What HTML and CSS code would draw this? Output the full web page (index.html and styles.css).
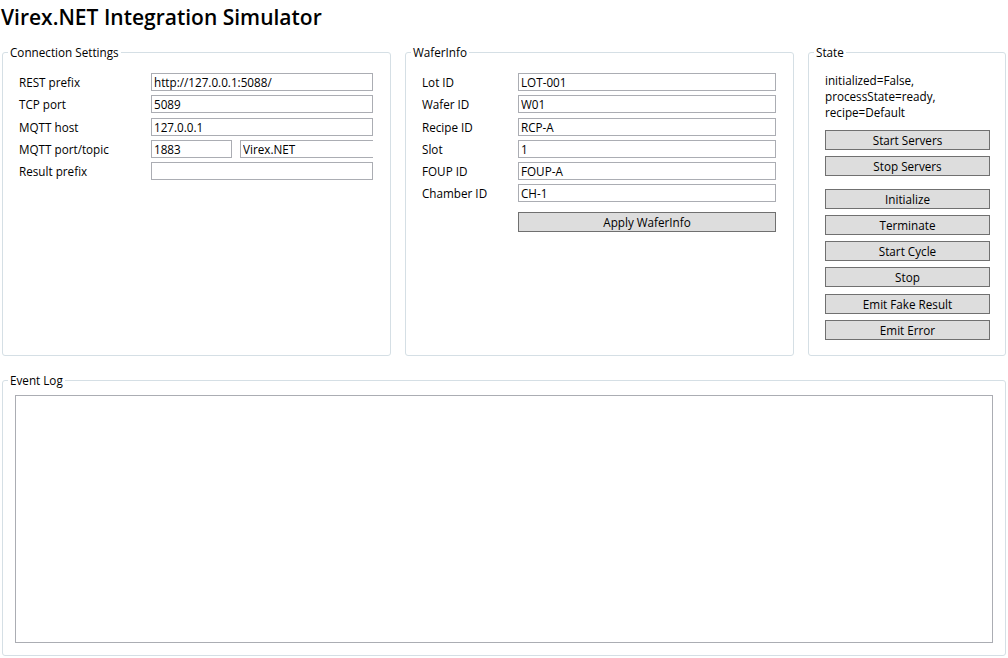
FILE: index.html
```html
<!DOCTYPE html>
<html lang="en">
<head>
  <meta charset="UTF-8" />
  <meta name="viewport" content="width=device-width, initial-scale=1.0" />
  <title>Virex.NET Integration Simulator</title>
  <link rel="stylesheet" href="styles.css">
</head>
<body>

  <h1 class="title">Virex.NET Integration Simulator</h1>

  <div class="panels">
    <fieldset class="group">
      <legend>Connection Settings</legend>
      <div class="form conn-form">
        <label>REST prefix</label>
        <input class="box" type="text" value="http://127.0.0.1:5088/" />
        <label>TCP port</label>
        <input class="box" type="text" value="5089" />
        <label>MQTT host</label>
        <input class="box" type="text" value="127.0.0.1" />
        <label>MQTT port/topic</label>
        <div class="pair">
          <input class="box port" type="text" value="1883" />
          <input class="box topic" type="text" value="Virex.NET" />
        </div>
        <label>Result prefix</label>
        <input class="box" type="text" value="" />
      </div>
    </fieldset>

    <fieldset class="group">
      <legend>WaferInfo</legend>
      <div class="form wafer-form">
        <label>Lot ID</label>
        <input class="box" type="text" value="LOT-001" />
        <label>Wafer ID</label>
        <input class="box" type="text" value="W01" />
        <label>Recipe ID</label>
        <input class="box" type="text" value="RCP-A" />
        <label>Slot</label>
        <input class="box" type="text" value="1" />
        <label>FOUP ID</label>
        <input class="box" type="text" value="FOUP-A" />
        <label>Chamber ID</label>
        <input class="box" type="text" value="CH-1" />
      </div>
      <div class="apply-row">
        <button class="btn" type="button">Apply WaferInfo</button>
      </div>
    </fieldset>

    <fieldset class="group state">
      <legend>State</legend>
      <div class="state-text">
        initialized=False,<br>
        processState=ready,<br>
        recipe=Default
      </div>
      <div class="actions">
        <button class="btn" type="button">Start Servers</button>
        <button class="btn" type="button">Stop Servers</button>
        <button class="btn spaced" type="button">Initialize</button>
        <button class="btn" type="button">Terminate</button>
        <button class="btn" type="button">Start Cycle</button>
        <button class="btn" type="button">Stop</button>
        <button class="btn" type="button">Emit Fake Result</button>
        <button class="btn" type="button">Emit Error</button>
      </div>
    </fieldset>
  </div>

  <fieldset class="group log">
    <legend>Event Log</legend>
    <textarea class="log-box" readonly></textarea>
  </fieldset>

</body>
</html>
```

FILE: styles.css
```css
body {
  margin: 0;
  font-family: "Open Sans", "Noto Sans", sans-serif;
  font-size: 11.7px;
  color: #000;
  background-color: #fff;
}

.title {
  margin: 0;
  padding-left: 1px;
  height: 44px;
  font-size: 21px;
  font-weight: 600;
  line-height: 34px;
}

.panels {
  display: grid;
  grid-template-columns: 1fr 1fr 198px;
  column-gap: 14px;
  height: 312px;
  padding: 0 2px;
}

.group {
  margin: 0;
  min-width: 0;
  padding: 13px 17px 12px 16px;
  border: 1px solid #d5dfe5;
  border-radius: 3px;
}

.group legend {
  margin-left: -11px;
  padding: 0 2px;
  line-height: 16px;
}

.form {
  display: grid;
  grid-auto-rows: 18px;
  row-gap: 4.3px;
  align-items: center;
}

.conn-form {
  grid-template-columns: 132px 1fr;
}

.wafer-form {
  grid-template-columns: 96px 1fr;
}

.box {
  box-sizing: border-box;
  width: 100%;
  height: 18px;
  margin: 0;
  padding: 0 2px;
  border: 1px solid #abadb3;
  font: inherit;
  color: #000;
  background-color: #fff;
}

.pair {
  display: flex;
  gap: 8px;
  overflow: hidden;
}

.pair .port {
  flex: none;
  width: 81px;
}

.pair .topic {
  flex: none;
  width: 170px;
}

.apply-row {
  margin-top: 10px;
  padding-left: 96px;
}

.btn {
  display: block;
  box-sizing: border-box;
  width: 100%;
  height: 20px;
  margin: 0;
  padding: 0;
  border: 1px solid #707070;
  background-color: #ddd;
  font: inherit;
  color: #000;
}

.state {
  padding: 12px 15px 12px 16px;
}

.state-text {
  line-height: 16px;
}

.actions {
  display: flex;
  flex-direction: column;
  gap: 6.3px;
  margin-top: 10px;
}

.actions .spaced {
  margin-top: 6px;
}

.log {
  display: block;
  margin: 16px 2px 0;
  height: 284px;
  box-sizing: border-box;
  padding: 7px 12px 12px 12px;
}

.log legend {
  margin-left: -7px;
}

.log-box {
  display: block;
  box-sizing: border-box;
  width: 100%;
  height: 248px;
  margin: 0;
  border: 1px solid #abadb3;
  resize: none;
  font: inherit;
}
```
